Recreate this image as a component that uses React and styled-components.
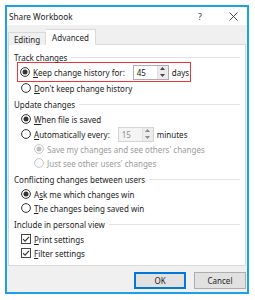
import React from 'react';
import styled, { createGlobalStyle, css } from 'styled-components';

const GlobalStyle = createGlobalStyle`
    html, body {
        margin: 0;
        padding: 0;
        background: #ffffff;
    }
    body {
        font-family: "Noto Sans", "Open Sans", sans-serif;
        font-size: 8px;
        color: #1e1e1e;
    }
`;

function Radio({ checked, disabled }) {
    const ring = disabled ? '#c4c4c4' : '#333333';
    const dot = disabled ? '#bdbdbd' : '#333333';
    return (
        <svg width="10" height="10" viewBox="0 0 10 10">
            <circle cx="5" cy="5" r="4.4" fill="#fff" stroke={ring} strokeWidth="1" />
            {checked && <circle cx="5" cy="5" r="2.5" fill={dot} />}
        </svg>
    );
}

function Check() {
    return (
        <svg width="10" height="10" viewBox="0 0 10 10">
            <rect x="0.5" y="0.5" width="9" height="9" fill="#fff" stroke="#444" strokeWidth="1" />
            <path d="M2 5.2 L4.1 7.2 L8 2.8" fill="none" stroke="#333" strokeWidth="1.1" />
        </svg>
    );
}

function Spin({ value, disabled }) {
    const arrow = disabled ? '#8a8a8a' : '#444';
    return (
        <SpinBox disabled={disabled}>
            <SpinValue disabled={disabled}>{value}</SpinValue>
            <SpinArrows>
                <SpinBtn>
                    <svg width="5" height="3" viewBox="0 0 5 3">
                        <path d="M0 3 L2.5 0 L5 3 Z" fill={arrow} />
                    </svg>
                </SpinBtn>
                <SpinBtn>
                    <svg width="5" height="3" viewBox="0 0 5 3">
                        <path d="M0 0 L2.5 3 L5 0 Z" fill={arrow} />
                    </svg>
                </SpinBtn>
            </SpinArrows>
        </SpinBox>
    );
}

function App() {
    return (
        <>
            <GlobalStyle />
            <Page>
                <Window>
                    <TitleBar>
                        <Title>Share Workbook</Title>
                        <TitleBtn>?</TitleBtn>
                        <CloseBtn>
                            <svg width="9" height="9" viewBox="0 0 9 9">
                                <path d="M0.5 0.5 L8.5 8.5 M8.5 0.5 L0.5 8.5" stroke="#333" strokeWidth="0.9" />
                            </svg>
                        </CloseBtn>
                    </TitleBar>
                    <Body>
                        <Tabs>
                            <Tab>Editing</Tab>
                            <Tab active>Advanced</Tab>
                        </Tabs>
                        <Panel>
                            <Group first>
                                <GroupTitle>Track changes</GroupTitle>
                            </Group>
                            <Row highlight>
                                <Radio checked />
                                <Label><u>K</u>eep change history for:</Label>
                                <Spin value="45" />
                                <Unit>days</Unit>
                            </Row>
                            <Row>
                                <Radio />
                                <Label><u>D</u>on't keep change history</Label>
                            </Row>

                            <Group>
                                <GroupTitle>Update changes</GroupTitle>
                            </Group>
                            <Row>
                                <Radio checked />
                                <Label><u>W</u>hen file is saved</Label>
                            </Row>
                            <Row tall>
                                <Radio />
                                <Label><u>A</u>utomatically every:</Label>
                                <Spin value="15" disabled />
                                <Unit>minutes</Unit>
                            </Row>
                            <Row sub>
                                <Radio checked disabled />
                                <Label disabled>Save my changes and see others' changes</Label>
                            </Row>
                            <Row sub>
                                <Radio disabled />
                                <Label disabled>Just see other users' changes</Label>
                            </Row>

                            <Group>
                                <GroupTitle>Conflicting changes between users</GroupTitle>
                            </Group>
                            <Row>
                                <Radio checked />
                                <Label>A<u>s</u>k me which changes win</Label>
                            </Row>
                            <Row>
                                <Radio />
                                <Label><u>T</u>he changes being saved win</Label>
                            </Row>

                            <Group>
                                <GroupTitle>Include in personal view</GroupTitle>
                            </Group>
                            <Row>
                                <Check />
                                <Label><u>P</u>rint settings</Label>
                            </Row>
                            <Row>
                                <Check />
                                <Label><u>F</u>ilter settings</Label>
                            </Row>
                        </Panel>
                        <Footer>
                            <Button primary>OK</Button>
                            <Button>Cancel</Button>
                        </Footer>
                    </Body>
                </Window>
            </Page>
        </>
    );
}

const Page = styled.div`
    padding: 5px 0 0 5px;
`;

const Window = styled.div`
    width: 244px;
    height: 289px;
    box-sizing: border-box;
    border: 2px solid #1ba1e6;
    background: #f0f0f0;
    display: flex;
    flex-direction: column;
`;

const TitleBar = styled.div`
    height: 18px;
    background: #ffffff;
    display: flex;
    align-items: center;
    padding-left: 2px;
    font-size: 8.2px;
`;

const Title = styled.div`
    flex: 1;
    color: #222;
`;

const TitleBtn = styled.div`
    width: 12px;
    margin-right: 19px;
    color: #444;
    font-size: 9px;
`;

const CloseBtn = styled.div`
    width: 9px;
    margin-right: 9px;
    display: flex;
`;

const Body = styled.div`
    flex: 1;
    display: flex;
    flex-direction: column;
    padding: 4px 1px 0 1px;
`;

const Tabs = styled.div`
    display: flex;
    align-items: flex-end;
    height: 16px;
    position: relative;
    z-index: 1;
    margin-bottom: -1px;
`;

const Tab = styled.div`
    box-sizing: border-box;
    border: 1px solid #d9d9d9;
    display: flex;
    align-items: center;
    justify-content: center;
    ${(p) =>
        p.active
            ? css`
                  width: 50px;
                  height: 16px;
                  background: #ffffff;
                  border-bottom-color: #ffffff;
                  border-left: none;
              `
            : css`
                  width: 38px;
                  height: 13px;
                  background: #f0f0f0;
                  border-bottom: none;
              `}
`;

const Panel = styled.div`
    height: 222px;
    box-sizing: border-box;
    background: #ffffff;
    border: 1px solid #d9d9d9;
    padding: 0 5px 0 5px;
`;

const Group = styled.div`
    display: flex;
    align-items: center;
    height: 12px;
    margin-top: ${(p) => (p.first ? '6px' : '3px')};
    margin-bottom: 2px;
    &::after {
        content: '';
        flex: 1;
        height: 1px;
        background: #e2e2e2;
        margin-left: 4px;
    }
`;

const GroupTitle = styled.span`
    color: #222;
`;

const Row = styled.div`
    display: flex;
    align-items: center;
    gap: 3px;
    height: ${(p) => (p.tall ? '16px' : '14px')};
    margin-left: ${(p) => (p.sub ? '20px' : '7px')};
    ${(p) =>
        p.highlight &&
        css`
            box-sizing: border-box;
            height: 20px;
            width: fit-content;
            margin: -3px 0 -1px 3px;
            padding: 0 1px 0 2px;
            border: 1.5px solid #e8373a;
        `}
`;

const Label = styled.span`
    color: ${(p) => (p.disabled ? '#9a9a9a' : '#222')};
    white-space: nowrap;
    u {
        text-underline-offset: 1px;
    }
`;

const Unit = styled.span`
    color: #222;
`;

const SpinBox = styled.div`
    display: flex;
    flex-shrink: 0;
    height: 15px;
    width: 36px;
    box-sizing: border-box;
    border: 1px solid ${(p) => (p.disabled ? '#d4d4d4' : '#abadb3')};
    background: ${(p) => (p.disabled ? '#f4f4f4' : '#ffffff')};
    margin-left: 5px;
`;

const SpinValue = styled.div`
    flex: 1;
    padding-left: 3px;
    display: flex;
    align-items: center;
    color: ${(p) => (p.disabled ? '#8d8d8d' : '#111')};
    border-right: 1px solid #e0e0e0;
`;

const SpinArrows = styled.div`
    width: 10px;
    display: flex;
    flex-direction: column;
    background: #ececec;
`;

const SpinBtn = styled.div`
    flex: 1;
    display: flex;
    align-items: center;
    justify-content: center;
`;

const Footer = styled.div`
    display: flex;
    justify-content: flex-end;
    gap: 8px;
    padding-top: 6px;
`;

const Button = styled.button`
    width: 52px;
    height: 17px;
    box-sizing: border-box;
    padding: 0;
    font-family: inherit;
    font-size: 8px;
    color: #222;
    background: #e1e1e1;
    border: 1px solid ${(p) => (p.primary ? '#0078d7' : '#adadad')};
    ${(p) =>
        p.primary &&
        css`
            box-shadow: inset 0 0 0 1px #0078d7;
        `}
`;

export default App;
